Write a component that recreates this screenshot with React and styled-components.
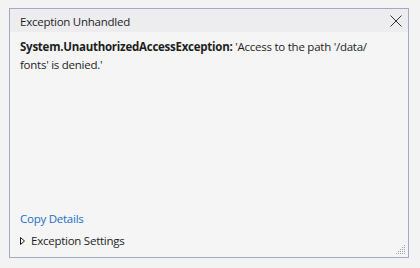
import React from "react";
import styled, { createGlobalStyle } from "styled-components";

const Global = createGlobalStyle`
  html, body { margin: 0; padding: 0; background: #f3f3f3; }
  body { font-family: "Segoe UI", "Open Sans", "Noto Sans", sans-serif; }
`;

const Page = styled.div`
  padding: 8px 0 0 9px;
  width: 420px;
  height: 268px;
  box-sizing: border-box;
`;

const Dialog = styled.div`
  width: 400px;
  height: 250px;
  box-sizing: border-box;
  border: 1px solid #a5a9c9;
  background: #f5f5f5;
  display: flex;
  flex-direction: column;
  position: relative;
`;

const Header = styled.div`
  height: 22px;
  background: #ededf0;
  display: flex;
  align-items: center;
  justify-content: space-between;
  padding: 1px 4px 0 10px;
`;

const Text = styled.div`
  font-size: 11.5px;
  letter-spacing: -0.25px;
  color: #1e1e1e;
`;

const Close = styled.button`
  border: 0;
  background: transparent;
  padding: 0;
  width: 16px;
  height: 16px;
  display: flex;
  align-items: center;
  justify-content: center;
`;

const Body = styled.div`
  flex: 1;
  display: flex;
  flex-direction: column;
  padding: 6px 10px 7px 10px;
`;

const Message = styled(Text)`
  line-height: 18px;
  flex: 1;
  b { font-weight: 700; }
`;

const Link = styled.a`
  font-size: 11.5px;
  letter-spacing: -0.25px;
  color: #1a6fc9;
  text-decoration: none;
  line-height: 18px;
  margin-top: 1px;
`;

const Settings = styled(Text)`
  display: flex;
  align-items: center;
  gap: 6px;
  margin-top: 4px;
  line-height: 18px;
`;

const Grip = styled.svg`
  position: absolute;
  right: 2px;
  bottom: 2px;
`;

export default function App() {
  const dots = [
    [8, 0],
    [6, 2], [8, 2],
    [4, 4], [6, 4], [8, 4],
    [2, 6], [4, 6], [6, 6], [8, 6],
    [0, 8], [2, 8], [4, 8], [6, 8], [8, 8],
  ];
  return (
    <Page>
      <Global />
      <Dialog>
        <Header>
          <Text>Exception Unhandled</Text>
          <Close aria-label="Close">
            <svg width="12" height="12" viewBox="0 0 12 12">
              <path d="M0.5 0.5 L11.5 11.5 M11.5 0.5 L0.5 11.5" stroke="#333" strokeWidth="1" fill="none" />
            </svg>
          </Close>
        </Header>
        <Body>
          <Message>
            <b>System.UnauthorizedAccessException:</b> 'Access to the path '/data/
            <br />
            fonts' is denied.'
          </Message>
          <Link href="#">Copy Details</Link>
          <Settings>
            <svg width="5" height="8" viewBox="0 0 5 8">
              <path d="M0.5 0.5 L4.5 4 L0.5 7.5 Z" fill="none" stroke="#1e1e1e" strokeWidth="1" />
            </svg>
            Exception Settings
          </Settings>
        </Body>
        <Grip width="10" height="10" viewBox="0 0 10 10">
          {dots.map(([x, y], i) => (
            <rect key={i} x={x} y={y} width="1" height="1" fill="#98a0c0" />
          ))}
        </Grip>
      </Dialog>
    </Page>
  );
}
